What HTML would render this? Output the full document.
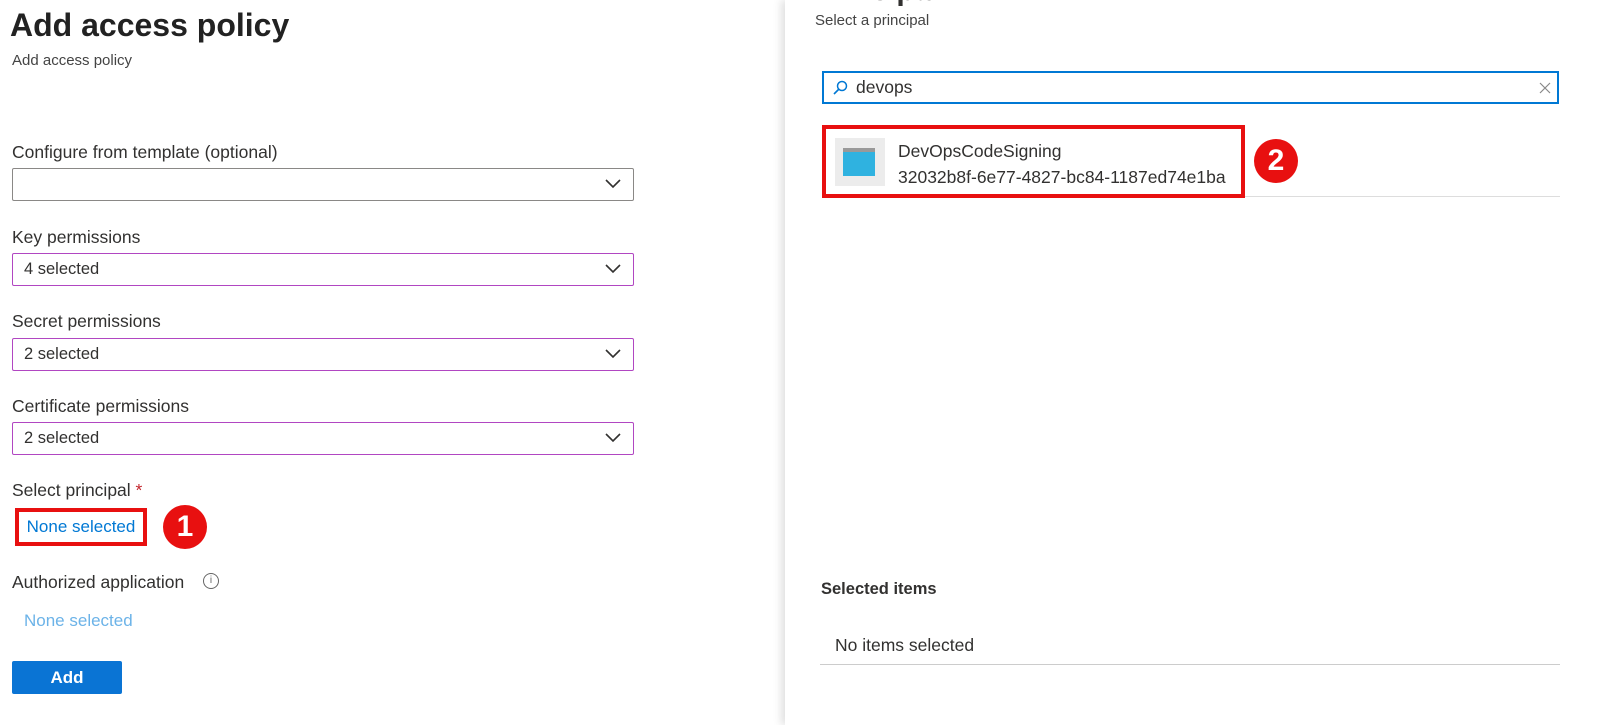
<!DOCTYPE html>
<html><head><style>
body{margin:0;width:1600px;height:725px;background:#fff;font-family:"Liberation Sans",sans-serif;position:relative;overflow:hidden;color:#323130}
.a{position:absolute}
.dd{position:absolute;left:12px;width:620px;height:31px;border:1px solid #8a8886;border-radius:2px;font-size:16.5px;line-height:31px;box-sizing:content-box}
.dd span{margin-left:11px}
.dd svg{position:absolute;right:12px;top:10px}
.p{border-color:#b146c2}
.lbl{position:absolute;left:12px;font-size:17.5px}
.circ{position:absolute;width:44px;height:44px;border-radius:50%;background:#e81010;color:#fff;font-weight:bold;font-size:30px;text-align:center;line-height:44px}
</style></head><body>
<div class="a" style="left:10px;top:7px;font-size:32px;font-weight:bold;color:#222">Add access policy</div>
<div class="a" style="left:12px;top:52px;font-size:15px;color:#444">Add access policy</div>
<div class="lbl" style="top:142px">Configure from template (optional)</div>
<div class="dd" style="top:168px"><svg width="16" height="10"><path d="M1 1l7 7 7-7" stroke="#323130" stroke-width="1.6" fill="none"/></svg></div>
<div class="lbl" style="top:227px">Key permissions</div>
<div class="dd p" style="top:253px"><span>4 selected</span><svg width="16" height="10"><path d="M1 1l7 7 7-7" stroke="#323130" stroke-width="1.6" fill="none"/></svg></div>
<div class="lbl" style="top:311px">Secret permissions</div>
<div class="dd p" style="top:338px"><span>2 selected</span><svg width="16" height="10"><path d="M1 1l7 7 7-7" stroke="#323130" stroke-width="1.6" fill="none"/></svg></div>
<div class="lbl" style="top:396px">Certificate permissions</div>
<div class="dd p" style="top:422px"><span>2 selected</span><svg width="16" height="10"><path d="M1 1l7 7 7-7" stroke="#323130" stroke-width="1.6" fill="none"/></svg></div>
<div class="lbl" style="top:480px">Select principal <span style="color:#c4262e">*</span></div>
<div class="a" style="left:15px;top:508px;width:124px;height:30px;border:4px solid #e81010;font-size:17px;line-height:30px;color:#0078d4;text-align:center">None selected</div>
<div class="circ" style="left:163px;top:505px">1</div>
<div class="lbl" style="top:572px">Authorized application</div>
<div class="a" style="left:203px;top:573px;width:14px;height:14px;border:1px solid #666;border-radius:50%;font-size:10px;text-align:center;line-height:14px;color:#666">i</div>
<div class="a" style="left:24px;top:611px;font-size:17px;color:#6cb3e8">None selected</div>
<div class="a" style="left:12px;top:661px;width:110px;height:33px;background:#0a74d4;border-radius:2px;color:#fff;font-weight:bold;font-size:17px;text-align:center;line-height:33px">Add</div>

<div class="a" style="left:785px;top:0;width:815px;height:725px;background:#fff;box-shadow:-4px 0 8px rgba(0,0,0,0.12)"></div>
<div class="a" style="left:813px;top:-26px;font-size:30px;font-weight:bold">Principal</div>
<div class="a" style="left:815px;top:12px;font-size:15px;color:#444">Select a principal</div>
<div class="a" style="left:822px;top:71px;width:733px;height:29px;border:2px solid #0078d4;font-size:17.5px;line-height:29px">
<svg class="a" style="left:8px;top:7px" width="16" height="16"><circle cx="10" cy="6" r="4.5" stroke="#0078d4" stroke-width="1.5" fill="none"/><path d="M7 9L2 14" stroke="#0078d4" stroke-width="1.6"/></svg>
<span style="margin-left:32px">devops</span>
<svg class="a" style="right:6px;top:9px" width="12" height="12"><path d="M1 1l10 10M11 1L1 11" stroke="#888" stroke-width="1.2"/></svg></div>
<div class="a" style="left:822px;top:196px;width:738px;height:1px;background:#ddd"></div>
<div class="a" style="left:822px;top:125px;width:415px;height:65px;border:4px solid #e81010;background:#fff"></div>
<div class="a" style="left:835px;top:138px;width:50px;height:48px;background:#ececec"></div>
<div class="a" style="left:843px;top:148px;width:32px;height:28px;background:#2fb2e0;border-top:4px solid #999;box-sizing:border-box"></div>
<div class="a" style="left:898px;top:141px;font-size:17.5px">DevOpsCodeSigning</div>
<div class="a" style="left:898px;top:167px;font-size:17.5px">32032b8f-6e77-4827-bc84-1187ed74e1ba</div>
<div class="circ" style="left:1254px;top:139px">2</div>
<div class="a" style="left:821px;top:580px;font-size:16.5px;font-weight:bold">Selected items</div>
<div class="a" style="left:835px;top:635px;font-size:17.5px">No items selected</div>
<div class="a" style="left:820px;top:664px;width:740px;height:1px;background:#ccc"></div>
</body></html>
